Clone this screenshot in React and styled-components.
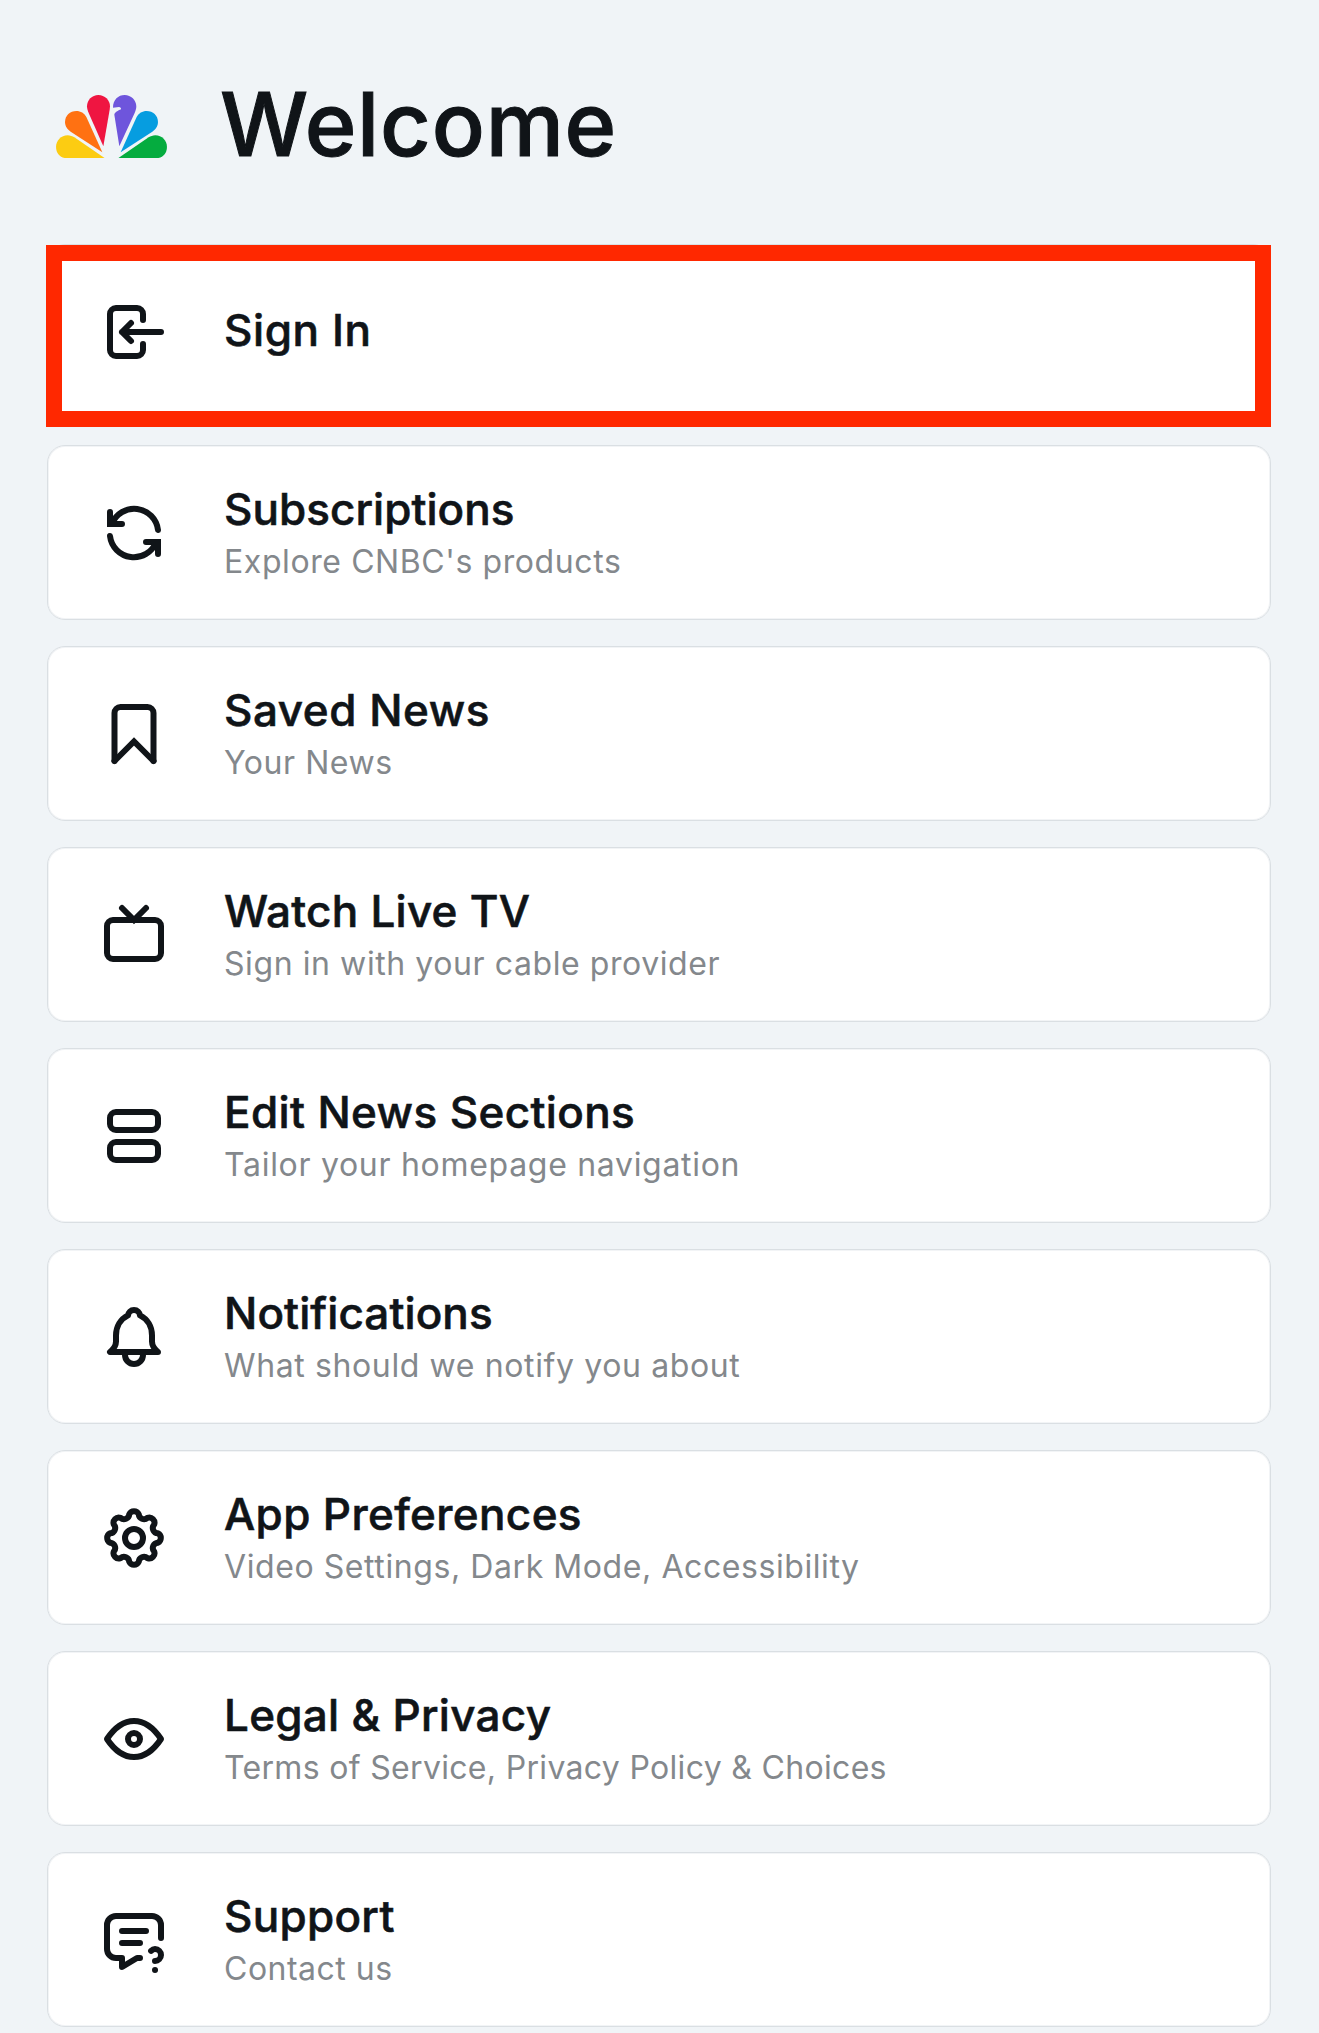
import React from "react";
import styled, { createGlobalStyle } from "styled-components";

const GlobalStyle = createGlobalStyle`
  * {
    box-sizing: border-box;
  }

  body {
    margin: 0;
    background: #f0f4f7;
    color: #101418;
    font-family: Inter, "Open Sans", sans-serif;
  }
`;

const Page = styled.main`
  height: 2033px;
  padding: 0 48px 0 47px;
  overflow: hidden;
`;

const Header = styled.header`
  display: flex;
  align-items: center;
  height: 244px;
  padding: 4px 0 0 9px;
`;

const Logo = styled.svg`
  width: 111px;
  height: 63.3px;
  margin: 5px 53px 0 0;
`;

const Heading = styled.h1`
  margin: 0;
  font-size: 88px;
  font-weight: 500;
  line-height: 110px;
  letter-spacing: 0.8px;
  -webkit-text-stroke: 1px currentColor;
`;

const Menu = styled.nav`
  display: flex;
  flex-direction: column;
  gap: 26px;
`;

const Card = styled.a`
  position: relative;
  display: flex;
  align-items: center;
  height: 175px;
  flex-shrink: 0;
  padding-left: 50px;
  background: #fff;
  border: 1px solid #dadfe3;
  border-radius: 18px;
  box-shadow: inset 0 0 0 1px #f2f4f6;
`;

// Red frame drawn over the active row
const Highlight = styled.span`
  position: absolute;
  top: 0;
  left: -2px;
  right: -1px;
  height: 182px;
  border: 16px solid #ff2800;
`;

const Icon = styled.svg`
  width: 72px;
  height: 72px;
  margin-right: 54px;
  fill: none;
  stroke: currentColor;
  stroke-width: 2;
  stroke-linecap: round;
`;

const Labels = styled.div`
  display: flex;
  flex-direction: column;
  gap: 7px;
  padding-bottom: ${({ $single }) => ($single ? 3 : 1)}px;
`;

const Title = styled.span`
  font-size: 44px;
  font-weight: 500;
  line-height: 52px;
  white-space: nowrap;
  letter-spacing: ${({ $spacing }) => $spacing}px;
  -webkit-text-stroke: 0.6px currentColor;
`;

const Subtitle = styled.span`
  color: #84888c;
  font-size: 32px;
  line-height: 40px;
  white-space: nowrap;
  letter-spacing: ${({ $spacing }) => $spacing}px;
`;

// Eight round lobes joined by equal, inverted arcs
const gearPath = () => {
  const points = [];
  for (let i = 0; i < 16; i++) {
    const a = ((i * 22.5 - 11.25) * Math.PI) / 180;
    points.push(`${(12 + 8.1 * Math.cos(a)).toFixed(2)} ${(12 + 8.1 * Math.sin(a)).toFixed(2)}`);
  }
  const arcs = points.map((_, i) => `A1.75 1.75 0 0 ${i % 2 ? 0 : 1} ${points[(i + 1) % 16]}`);
  return `M${points[0]}${arcs.join("")}Z`;
};

const icons = {
  signIn: (
    <>
      <path d="M15 8V6a2 2 0 0 0-2-2H6a2 2 0 0 0-2 2v12a2 2 0 0 0 2 2h7a2 2 0 0 0 2-2v-2" />
      <path d="M21 12H8M11 9l-3 3 3 3" strokeLinejoin="round" />
    </>
  ),
  refresh: (
    <>
      <path d="M4 5v4h4M4.6 9A8 8 0 0 1 20 11" />
      <path d="M20 19v-4h-4M19.4 15A8 8 0 0 1 4 13" />
    </>
  ),
  bookmark: (
    <>
      <path d="M5.5 21V5a2 2 0 0 1 2-2h9a2 2 0 0 1 2 2v16" />
      <path d="M5.5 21l6.5-6.5 6.5 6.5" />
    </>
  ),
  tv: (
    <>
      <rect x="3" y="7" width="18" height="13" rx="2" />
      <path d="M8 3l4 4 4-4" />
    </>
  ),
  sections: (
    <>
      <rect x="4" y="4" width="16" height="6" rx="2" />
      <rect x="4" y="14" width="16" height="6" rx="2" />
    </>
  ),
  bell: (
    <>
      <path
        d="M12 3c-1.1 0-1.9.8-2 1.8C7.5 6 6 8.6 6 11.5v2c0 1.4-.8 2.5-2 3.5h16c-1.2-1-2-2.1-2-3.5v-2c0-2.9-1.5-5.5-4-6.7-.1-1-.9-1.8-2-1.8z"
        strokeLinejoin="round"
      />
      <path d="M9 17v1a3 3 0 0 0 6 0v-1" />
    </>
  ),
  gear: (
    <>
      <path d={gearPath()} strokeLinejoin="round" />
      <circle cx="12" cy="12" r="3" />
    </>
  ),
  eye: (
    <>
      <path
        d="M3 12C5.4 8.4 8.4 6 12 6s6.6 2.4 9 6c-2.4 3.6-5.4 6-9 6s-6.6-2.4-9-6z"
        strokeLinejoin="round"
      />
      <circle cx="12" cy="12" r="2" />
    </>
  ),
  support: (
    <>
      <path d="M21 11.3V7a3 3 0 0 0-3-3H6a3 3 0 0 0-3 3v8a3 3 0 0 0 3 3h2v3l5-3h1" strokeLinejoin="round" />
      <path d="M8 9h8M8 13h6" />
      <path d="M17.7 15.6c.4-.4.8-.6 1.3-.6a2 2 0 0 1 0 4M19 22h.01" />
    </>
  ),
};

// spacing: [title, subtitle] letter-spacing in px
const items = [
  { icon: "signIn", title: "Sign In", spacing: [0.6, 0], highlighted: true },
  { icon: "refresh", title: "Subscriptions", subtitle: "Explore CNBC's products", spacing: [0.05, 0.59] },
  { icon: "bookmark", title: "Saved News", subtitle: "Your News", spacing: [0.55, 0.55] },
  { icon: "tv", title: "Watch Live TV", subtitle: "Sign in with your cable provider", spacing: [0.25, 0.58] },
  { icon: "sections", title: "Edit News Sections", subtitle: "Tailor your homepage navigation", spacing: [0.38, 0.7] },
  { icon: "bell", title: "Notifications", subtitle: "What should we notify you about", spacing: [0.1, 0.62] },
  { icon: "gear", title: "App Preferences", subtitle: "Video Settings, Dark Mode, Accessibility", spacing: [0.37, 0.58] },
  { icon: "eye", title: "Legal & Privacy", subtitle: "Terms of Service, Privacy Policy & Choices", spacing: [0.28, 0.32] },
  { icon: "support", title: "Support", subtitle: "Contact us", spacing: [0.3, 0.5] },
];

const yellowFeather =
  "M195 234H82C62 234 48 220 48 200C48 181 63 165 83 165C91 165 97 168 103 171Z";
const orangeFeather =
  "M187 216L92 154C82 147 75 138 75 125C75 106 90 92 109 92C122 92 133 99 139 110Z";

const Peacock = () => (
  <Logo viewBox="48 44 333 190">
    <path fill="#fccc12" d={yellowFeather} />
    <path fill="#ff7112" d={orangeFeather} />
    <path fill="#ef1541" d="M190 198L146 98C143 91 141 85 141 78C141 59 156 44 175 44C194 44 210 59 210 78L209 88Z" />
    <path
      fill="#6e55dc"
      d="M238 198L223 103C224 96 234 91 243 87C244 84 241 80 237 80L219 82C219 58 235 44 254 44C273 44 289 59 289 78C289 85 287 91 284 98Z"
    />
    <g transform="matrix(-1 0 0 1 429 0)">
      <path fill="#069de0" d={orangeFeather} />
      <path fill="#05ac3f" d={yellowFeather} />
    </g>
  </Logo>
);

const App = () => {
  return (
    <>
      <GlobalStyle />
      <Page>
        <Header>
          <Peacock />
          <Heading>Welcome</Heading>
        </Header>
        <Menu>
          {items.map(({ icon, title, subtitle, spacing, highlighted }) => (
            <Card key={title}>
              <Icon viewBox="0 0 24 24">{icons[icon]}</Icon>
              <Labels $single={!subtitle}>
                <Title $spacing={spacing[0]}>{title}</Title>
                {subtitle && <Subtitle $spacing={spacing[1]}>{subtitle}</Subtitle>}
              </Labels>
              {highlighted && <Highlight />}
            </Card>
          ))}
        </Menu>
      </Page>
    </>
  );
};

export default App;
